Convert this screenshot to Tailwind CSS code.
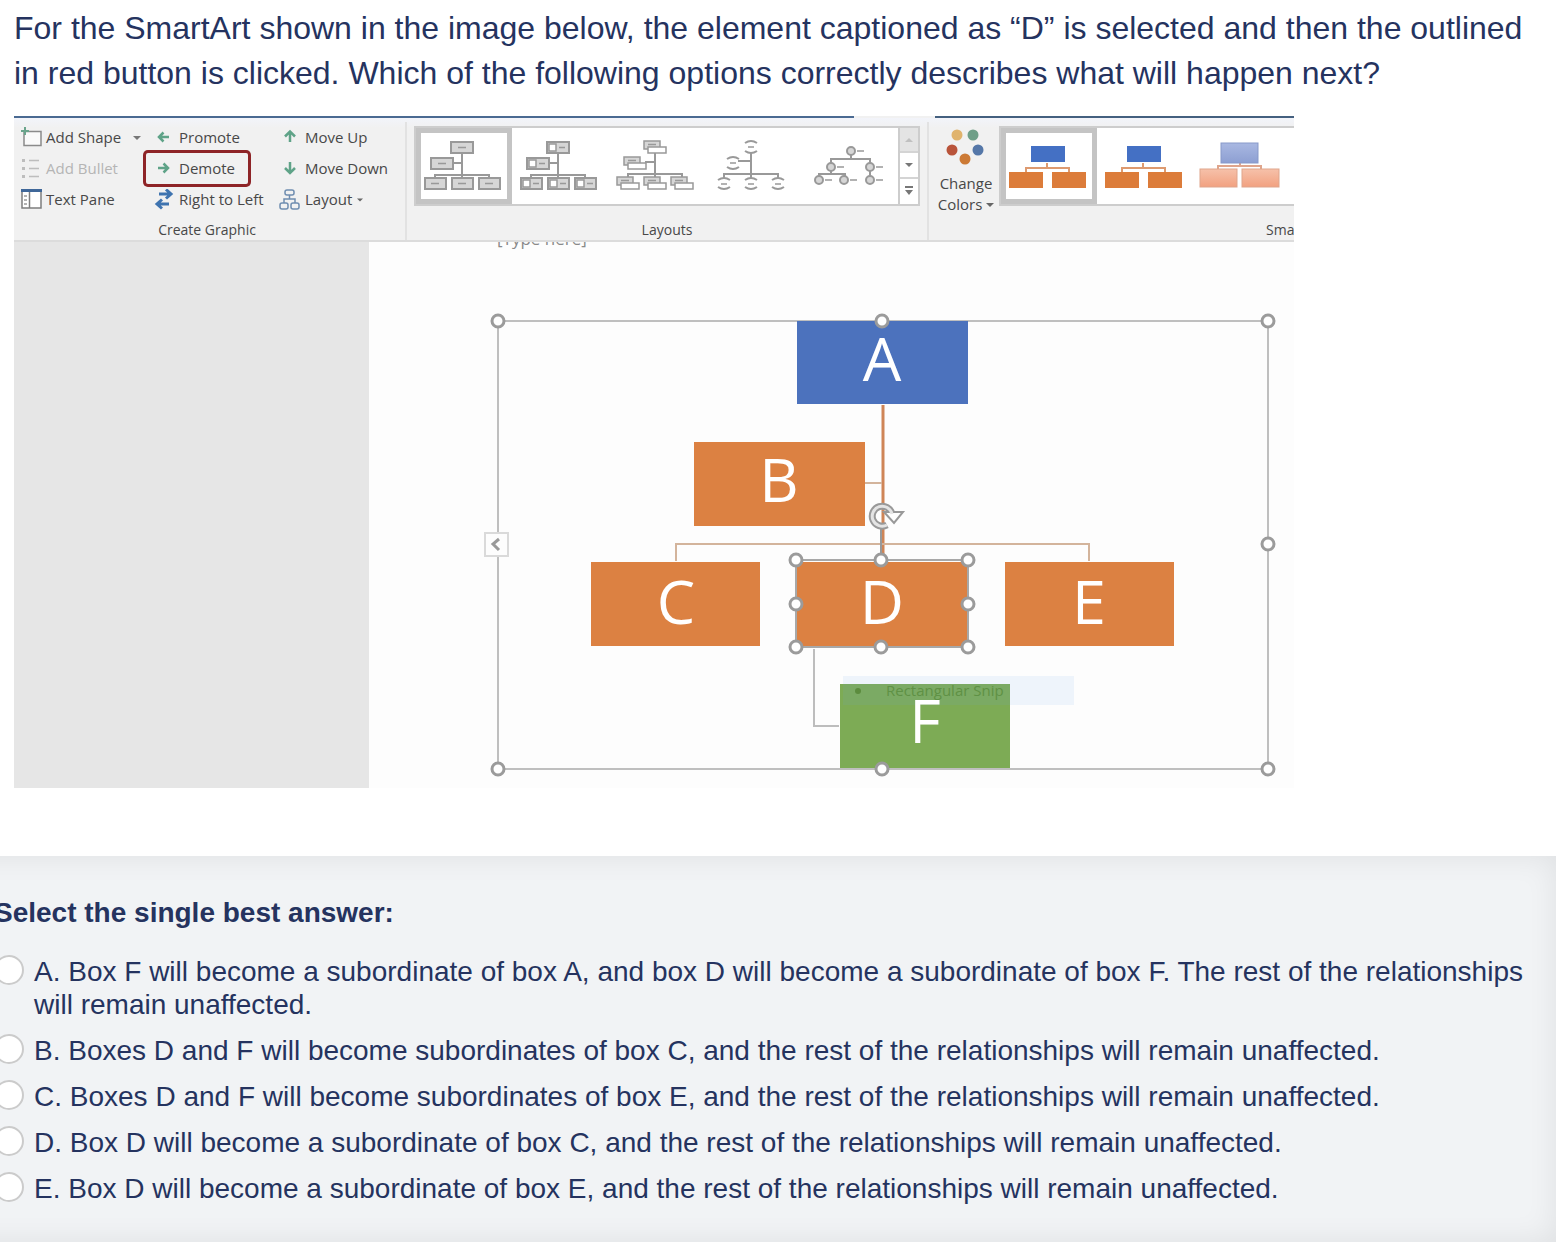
<!DOCTYPE html>
<html lang="en">

<head>
    <meta charset="UTF-8">
    <meta name="viewport" content="width=device-width, initial-scale=1.0">
    <title>SmartArt Question</title>
    <script src="https://cdn.jsdelivr.net/npm/@tailwindcss/browser@4"></script>
</head>

<body class="bg-white text-[#25335f] font-['Liberation_Sans',Arial,sans-serif] overflow-x-hidden">

<!-- Question -->
<main class="px-[14px] pt-[6px] pb-[68px]">
    <p class="text-[32px] leading-[45px]">For the SmartArt shown in the image below, the element captioned as “D” is selected and then the outlined in red button is clicked. Which of the following options correctly describes what will happen next?</p>

    <div class="mt-5 max-w-[1280px] overflow-hidden bg-[#fdfdfd] font-['Open_Sans','Noto_Sans',sans-serif]">
        <!-- Ribbon -->
        <div class="bg-[#f1f1f1] border-b-2 border-[#dcdcdc] text-[#484848] text-[15px]">
            <div class="flex h-[2px]">
                <div class="w-[840px] shrink-0 bg-[#4a6a92]"></div>
                <div class="w-[81px] shrink-0"></div>
                <div class="grow bg-[#44607f]"></div>
            </div>
            <div class="flex pt-1 bg-linear-to-b from-[#f2f4fa] to-[#f1f1f1] to-8%">
                <!-- Create Graphic -->
                <div class="w-[393px] shrink-0 pl-[7px] border-r-2 border-[#e2e2e2]">
                    <div class="grid grid-cols-[125px_133px_1fr] auto-rows-[31px]">
                        <button class="flex items-center gap-1 whitespace-nowrap">
                            <svg class="w-[21px] h-[22px] shrink-0" viewBox="0 0 21 22" fill="none">
                                <path d="M3 4.500H20V18.500H3Z" fill="#fafafa" stroke="#8b8b8b" stroke-width="1.500"/>
                                <path d="M4 0V8M0 4H8" stroke="#6aa48c" stroke-width="2"/>
                            </svg>
                            Add Shape
                            <svg class="w-2 h-2 ml-2 shrink-0" viewBox="0 0 8 8"><path d="M0 2H8L4 6Z" fill="#777"/></svg>
                        </button>
                        <button class="flex items-center gap-[5px] pl-2 whitespace-nowrap">
                            <svg class="w-5 h-5 shrink-0" viewBox="0 0 20 20" fill="none" stroke="#5fa388" stroke-width="2.500"><path d="M15 9H5M9.500 4.500L5 9L9.500 13.500"/></svg>
                            Promote
                        </button>
                        <button class="flex items-center gap-[5px] whitespace-nowrap">
                            <svg class="w-[21px] h-5 shrink-0" viewBox="0 0 21 20" fill="none" stroke="#5fa388" stroke-width="2.500"><path d="M11 14V4M6 8.500L11 3.500L16 8.500"/></svg>
                            Move Up
                        </button>
                        <button class="flex items-center gap-1 whitespace-nowrap text-[#b5b5b5]">
                            <svg class="w-[21px] h-[22px] shrink-0" viewBox="0 0 21 22" stroke="#bdbdbd"><path d="M8 2.500H18M8 10.500H18M8 18.500H18" stroke-width="1.500"/><path d="M1 2.500H4M1 10.500H4M1 18.500H4" stroke-width="3"/></svg>
                            Add Bullet
                        </button>
                        <button class="flex items-center gap-[5px] w-[102px] pl-2 whitespace-nowrap rounded-xs ring-3 ring-[#8e2427]">
                            <svg class="w-5 h-5 shrink-0" viewBox="0 0 20 20" fill="none" stroke="#5fa388" stroke-width="2.500"><path d="M4 9H14M9.500 4.500L14 9L9.500 13.500"/></svg>
                            Demote
                        </button>
                        <button class="flex items-center gap-[5px] whitespace-nowrap">
                            <svg class="w-[21px] h-5 shrink-0" viewBox="0 0 21 20" fill="none" stroke="#5fa388" stroke-width="2.500"><path d="M11 3V13M6 9L11 14L16 9"/></svg>
                            Move Down
                        </button>
                        <button class="flex items-center gap-1 whitespace-nowrap">
                            <svg class="w-[21px] h-[22px] shrink-0" viewBox="0 0 21 22" fill="none">
                                <path d="M1 2H20V19H1Z" fill="#fff" stroke="#7d7d7d" stroke-width="1.500"/>
                                <path d="M0 1.500H21" stroke="#3f6799" stroke-width="3"/>
                                <path d="M8.500 3V19" stroke="#7d7d7d" stroke-width="1.500"/>
                                <path d="M3 7H6M3 11H6M3 15H6" stroke="#999" stroke-width="1.500"/>
                            </svg>
                            Text Pane
                        </button>
                        <button class="flex items-center gap-[5px] pl-2 whitespace-nowrap">
                            <svg class="w-5 h-[22px] shrink-0" viewBox="0 0 20 22" fill="none" stroke="#3f74b0" stroke-width="3"><path d="M5 5H17M12 0.500L17 5L12 9.500"/><path d="M15 15H3M8 10.500L3 15L8 19.500"/></svg>
                            Right to Left
                        </button>
                        <button class="flex items-center gap-[5px] whitespace-nowrap">
                            <svg class="w-[21px] h-[22px] shrink-0" viewBox="0 0 21 22" fill="none" stroke="#6f8db0" stroke-width="1.500"><rect x="6" y="1" width="9" height="5" rx="2"/><rect x="1" y="14" width="8" height="6" rx="2"/><rect x="12" y="14" width="8" height="6" rx="2"/><path d="M10.500 6V10M5 14V10H16V14"/></svg>
                            Layout
                            <svg class="w-[6px] h-2 shrink-0" viewBox="0 0 8 8"><path d="M0 2H8L4 6Z" fill="#666"/></svg>
                        </button>
                    </div>
                    <div class="mt-1 h-[21px] leading-[21px] pr-3 text-[14px] text-center">Create Graphic</div>
                </div>

                <!-- Layouts -->
                <div class="w-[522px] shrink-0 flex flex-col items-center pt-1 border-r-2 border-[#e2e2e2]">
                    <div class="flex w-[506px] h-20 bg-white border-2 border-[#cdcdcd]">
                        <button class="w-24 h-full border-5 border-[#c4c4c4]" aria-label="Organization Chart">
                            <svg class="w-full h-full" viewBox="0 0 86 66" stroke="#999" stroke-width="2" fill="#d6d6d6">
                                <path d="M41 18V46M31 30H41M14 47V42H68V47" fill="none"/>
                                <rect x="30" y="9" width="22" height="11"/><rect x="10" y="25" width="22" height="11"/>
                                <rect x="4" y="45" width="21" height="11"/><rect x="31" y="45" width="21" height="11"/><rect x="58" y="45" width="21" height="11"/>
                                <path d="M37 14.500H45M17 30.500H25M10 50.500H18M37 50.500H45M64 50.500H72" stroke-width="1.500"/>
                            </svg>
                        </button>
                        <button class="w-24 h-full" aria-label="Picture Organization Chart">
                            <svg class="w-full h-full" viewBox="0 0 96 76" stroke="#999" stroke-width="2" fill="#d6d6d6">
                                <path d="M46 23V51M36 35H46M19 52V47H73V52" fill="none"/>
                                <rect x="35" y="14" width="22" height="11"/><rect x="15" y="30" width="22" height="11"/>
                                <rect x="9" y="50" width="21" height="11"/><rect x="36" y="50" width="21" height="11"/><rect x="63" y="50" width="21" height="11"/>
                                <g fill="#fff" stroke-width="1.500"><rect x="37" y="16" width="7" height="7"/><rect x="17" y="32" width="7" height="7"/><rect x="11" y="52" width="7" height="7"/><rect x="38" y="52" width="7" height="7"/><rect x="65" y="52" width="7" height="7"/></g>
                                <path d="M47 19.500H53M27 35.500H33M21 55.500H27M48 55.500H54M75 55.500H81" stroke-width="1.500"/>
                            </svg>
                        </button>
                        <button class="w-24 h-full" aria-label="Name and Title Organization Chart">
                            <svg class="w-full h-full" viewBox="0 0 96 76" stroke="#999" stroke-width="2" fill="#d6d6d6">
                                <path d="M47 24V51M37 34H47M20 50V46H74V50" fill="none"/>
                                <g stroke-width="1.500">
                                    <rect x="36" y="13" width="16" height="8"/><rect x="16" y="29" width="16" height="8"/>
                                    <rect x="9" y="49" width="16" height="8"/><rect x="36" y="49" width="16" height="8"/><rect x="63" y="49" width="16" height="8"/>
                                    <path d="M40 16.500H48M20 32.500H28M13 52.500H21M40 52.500H48M67 52.500H75"/>
                                    <g fill="#fff"><rect x="40" y="19" width="18" height="6"/><rect x="20" y="35" width="18" height="6"/><rect x="13" y="55" width="18" height="6"/><rect x="40" y="55" width="18" height="6"/><rect x="67" y="55" width="18" height="6"/></g>
                                </g>
                            </svg>
                        </button>
                        <button class="w-24 h-full" aria-label="Half Circle Organization Chart">
                            <svg class="w-full h-full" viewBox="0 0 96 76" stroke="#999" stroke-width="2" fill="none">
                                <path d="M47 25V50M34 33H47M20 50V46H74V50"/>
                                <path d="M41 15Q47 11 53 15M41 23Q47 27 53 23M23 31Q29 27 35 31M23 39Q29 43 35 39"/>
                                <path d="M14 52Q20 48 26 52M14 59Q20 63 26 59M41 52Q47 48 53 52M41 59Q47 63 53 59M68 52Q74 48 80 52M68 59Q74 63 80 59"/>
                                <path d="M44 19H50M26 35H32M17 56H23M44 56H50M71 56H77" stroke-width="1.500"/>
                            </svg>
                        </button>
                        <button class="w-24 h-full" aria-label="Circle Picture Hierarchy">
                            <svg class="w-full h-full" viewBox="0 0 96 76" stroke="#999" stroke-width="2" fill="#d6d6d6">
                                <path d="M51 26V31M31 35V31H70V51M31 43V46M19 51V46H45V51" fill="none"/>
                                <circle cx="51" cy="23" r="4"/><circle cx="31" cy="39" r="4"/><circle cx="70" cy="39" r="4"/>
                                <circle cx="19" cy="52" r="4"/><circle cx="44" cy="52" r="4"/><circle cx="70" cy="52" r="4"/>
                                <path d="M57 23H64M37 39H44M76 39H83M25 52H32M50 52H57M76 52H83" stroke-width="1.500"/>
                            </svg>
                        </button>
                        <div class="grow flex flex-col ml-[2px] border-l-2 border-[#cdcdcd]">
                            <button class="grow flex items-center justify-center bg-[#e4e4e4]" aria-label="Scroll up"><svg class="w-2 h-2" viewBox="0 0 8 8"><path d="M0 6H8L4 2Z" fill="#c0c0c0"/></svg></button>
                            <button class="grow flex items-center justify-center border-y-2 border-[#d4d4d4]" aria-label="Scroll down"><svg class="w-2 h-2" viewBox="0 0 8 8"><path d="M0 2H8L4 6Z" fill="#777"/></svg></button>
                            <button class="grow flex items-center justify-center" aria-label="More layouts"><svg class="w-2 h-[10px]" viewBox="0 0 8 10"><path d="M0 0H8V2H0ZM0 4H8L4 9Z" fill="#777"/></svg></button>
                        </div>
                    </div>
                    <div class="mt-[13px] h-[21px] leading-[21px] text-[14px]">Layouts</div>
                </div>

                <!-- SmartArt Styles -->
                <div class="grow w-0 flex pt-1">
                    <button class="w-[70px] shrink-0 flex flex-col items-center pl-1 leading-[21px]">
                        <svg class="w-10 h-[38px] mt-[2px] mb-[7px]" viewBox="0 0 40 38"><circle cx="11" cy="7" r="5.500" fill="#e0b36c"/><circle cx="27" cy="7" r="5.500" fill="#6f9f88"/><circle cx="6" cy="22" r="5.500" fill="#b9543a"/><circle cx="32" cy="22" r="5.500" fill="#5577a8"/><circle cx="19" cy="31" r="5.500" fill="#cc7a35"/></svg>
                        <span>Change</span>
                        <span class="flex items-center gap-1">Colors <svg class="w-2 h-2" viewBox="0 0 8 8"><path d="M0 2H8L4 6Z" fill="#666"/></svg></span>
                    </button>
                    <div class="grow w-0">
                        <div class="flex h-20 bg-white border-y-2 border-l-2 border-[#cdcdcd] overflow-hidden">
                            <button class="w-24 shrink-0 h-full border-5 border-[#c4c4c4]" aria-label="Simple Fill">
                                <svg class="w-full h-full" viewBox="0 0 86 66"><path d="M20 39V35H63V39M41 35V30" fill="none" stroke="#dd9a70" stroke-width="2"/><rect x="25" y="13" width="34" height="16" fill="#4470c4"/><rect x="3" y="39" width="34" height="16" fill="#dc7c3a"/><rect x="46" y="39" width="34" height="16" fill="#dc7c3a"/></svg>
                            </button>
                            <button class="w-24 shrink-0 h-full" aria-label="White Outline">
                                <svg class="w-full h-full" viewBox="0 0 96 76"><path d="M25 44V40H68V44M46 40V35" fill="none" stroke="#dd9a70" stroke-width="2"/><rect x="30" y="18" width="34" height="16" fill="#4470c4"/><rect x="8" y="44" width="34" height="16" fill="#dc7c3a"/><rect x="51" y="44" width="34" height="16" fill="#dc7c3a"/></svg>
                            </button>
                            <button class="w-24 shrink-0 h-full" aria-label="Subtle Effect">
                                <svg class="w-full h-full" viewBox="0 0 96 76">
                                    <defs>
                                        <linearGradient id="softBlue" x2="0" y2="1"><stop stop-color="#a9b8e2"/><stop offset="1" stop-color="#8d9fd2"/></linearGradient>
                                        <linearGradient id="softOrange" x2="0" y2="1"><stop stop-color="#f6c1aa"/><stop offset="1" stop-color="#f2a180"/></linearGradient>
                                    </defs>
                                    <path d="M25 42V38H68V42M47 38V34" fill="none" stroke="#dfa58c" stroke-width="2"/><rect x="28" y="15" width="37" height="20" fill="url(#softBlue)" stroke="#8799c9"/><rect x="7" y="41" width="37" height="18" fill="url(#softOrange)" stroke="#dfa58c"/><rect x="49" y="41" width="37" height="18" fill="url(#softOrange)" stroke="#dfa58c"/></svg>
                            </button>
                        </div>
                        <div class="mt-[13px] h-[21px] leading-[21px] pl-[267px] text-[14px] whitespace-nowrap">SmartArt Styles</div>
                    </div>
                </div>
            </div>
        </div>

        <!-- Document canvas -->
        <svg class="block w-full h-auto" viewBox="0 0 1280 546">
            <rect width="355" height="546" fill="#e6e6e6"/>
            <text x="483" y="3" font-size="17" fill="#8a8a8a">[Type here]</text>

            <!-- Connectors -->
            <g fill="none" stroke-width="2">
                <path d="M869 163V318" stroke="#cf8557" stroke-width="3"/>
                <path d="M851 241H868M662 319V302H1075V319" stroke="#d3b49c"/>
                <path d="M800 407V484H825" stroke="#bdbdbd"/>
                <rect x="484" y="79" width="770" height="448" stroke="#bfbfbf"/>
            </g>

            <rect x="783" y="79" width="171" height="83" fill="#4c72bd"/>
            <g fill="#dc8142">
                <rect x="680" y="200" width="171" height="84"/>
                <rect x="577" y="320" width="169" height="84"/>
                <rect x="783" y="320" width="171" height="85"/>
                <rect x="991" y="320" width="169" height="84"/>
            </g>
            <rect x="826" y="442" width="170" height="84" fill="#7dab55"/>

            <!-- Snip menu ghost -->
            <rect x="829" y="434" width="231" height="29" fill="#6aa6e8" opacity=".1"/>
            <circle cx="844" cy="449" r="3" fill="#5c8c3e"/>
            <text x="872" y="454" font-size="15" fill="#5f9145">Rectangular Snip</text>

            <g font-size="61" fill="#fff" text-anchor="middle">
                <text x="868" y="139">A</text>
                <text x="765" y="260">B</text>
                <text x="662" y="382">C</text>
                <text x="868" y="382">D</text>
                <text x="1075" y="382">E</text>
                <text x="911" y="501">F</text>
            </g>

            <!-- Selection of D, rotate handle -->
            <rect x="782" y="318" width="172" height="87" fill="none" stroke="#a8a8a8" stroke-width="2"/>
            <path d="M867 285V312" stroke="#999" stroke-width="2"/>
            <path d="M873 283A10 10 0 1 1 878 272" fill="none" stroke="#999" stroke-width="7"/>
            <path d="M870 270H889L880 281Z" fill="#fff" stroke="#999" stroke-width="2"/>
            <path d="M873 283A10 10 0 1 1 878 272" fill="none" stroke="#e4e4e4" stroke-width="3"/>

            <g fill="#fff" stroke="#9b9b9b" stroke-width="3">
                <circle cx="484" cy="79" r="6"/><circle cx="868" cy="79" r="6"/><circle cx="1254" cy="79" r="6"/>
                <circle cx="1254" cy="302" r="6"/>
                <circle cx="484" cy="527" r="6"/><circle cx="868" cy="527" r="6"/><circle cx="1254" cy="527" r="6"/>
                <circle cx="782" cy="318" r="6"/><circle cx="867" cy="318" r="6"/><circle cx="954" cy="318" r="6"/>
                <circle cx="782" cy="362" r="6"/><circle cx="954" cy="362" r="6"/>
                <circle cx="782" cy="405" r="6"/><circle cx="867" cy="405" r="6"/><circle cx="954" cy="405" r="6"/>
            </g>

            <!-- Text pane toggle -->
            <rect x="471" y="291" width="23" height="23" fill="#fdfdfd" stroke="#dadada" stroke-width="2"/>
            <path d="M485 297L479 302L485 308" fill="none" stroke="#999" stroke-width="3"/>
        </svg>
    </div>
</main>

<!-- Answers -->
<section class="-ml-10 pl-[34px] pr-6 pt-10 pb-[37px] bg-[#f1f3f5] shadow-[inset_0_0_30px_rgba(0,0,0,0.08)] text-[28px] leading-[33px]">
    <form>
        <fieldset>
            <legend class="font-bold">Select the single best answer:</legend>
            <div class="mt-[26px] flex flex-col gap-[13px]">
                <label class="flex gap-[10px]">
                    <input type="radio" name="answer" value="A" class="appearance-none shrink-0 size-[30px] rounded-full bg-white border-2 border-[#cbcbcb] checked:border-8 checked:border-[#25335f]">
                    <span>A. Box F will become a subordinate of box A, and box D will become a subordinate of box F. The rest of the relationships will remain unaffected.</span>
                </label>
                <label class="flex gap-[10px]">
                    <input type="radio" name="answer" value="B" class="appearance-none shrink-0 size-[30px] rounded-full bg-white border-2 border-[#cbcbcb] checked:border-8 checked:border-[#25335f]">
                    <span>B. Boxes D and F will become subordinates of box C, and the rest of the relationships will remain unaffected.</span>
                </label>
                <label class="flex gap-[10px]">
                    <input type="radio" name="answer" value="C" class="appearance-none shrink-0 size-[30px] rounded-full bg-white border-2 border-[#cbcbcb] checked:border-8 checked:border-[#25335f]">
                    <span>C. Boxes D and F will become subordinates of box E, and the rest of the relationships will remain unaffected.</span>
                </label>
                <label class="flex gap-[10px]">
                    <input type="radio" name="answer" value="D" class="appearance-none shrink-0 size-[30px] rounded-full bg-white border-2 border-[#cbcbcb] checked:border-8 checked:border-[#25335f]">
                    <span>D. Box D will become a subordinate of box C, and the rest of the relationships will remain unaffected.</span>
                </label>
                <label class="flex gap-[10px]">
                    <input type="radio" name="answer" value="E" class="appearance-none shrink-0 size-[30px] rounded-full bg-white border-2 border-[#cbcbcb] checked:border-8 checked:border-[#25335f]">
                    <span>E. Box D will become a subordinate of box E, and the rest of the relationships will remain unaffected.</span>
                </label>
            </div>
        </fieldset>
    </form>
</section>

</body>

</html>
